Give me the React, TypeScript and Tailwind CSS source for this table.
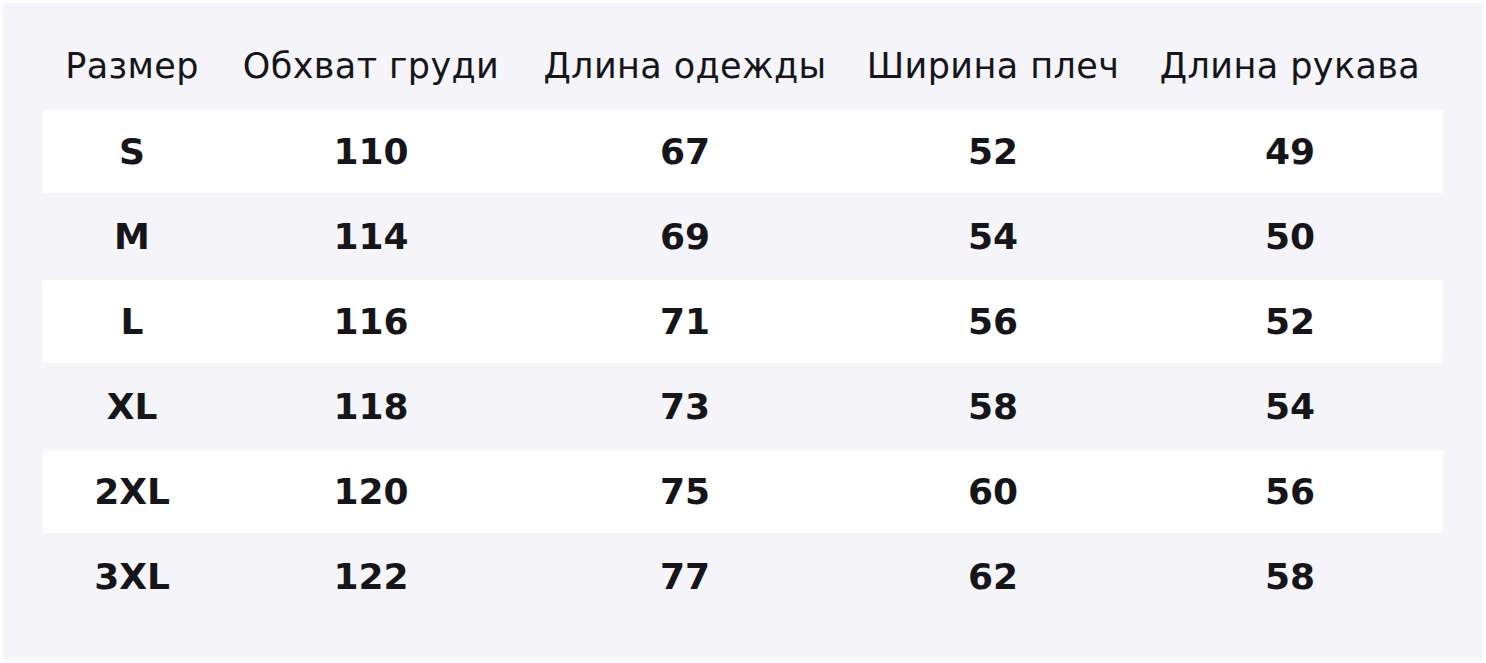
const headers = ['Размер', 'Обхват груди', 'Длина одежды', 'Ширина плеч', 'Длина рукава']

const rows = [
  ['S', '110', '67', '52', '49'],
  ['M', '114', '69', '54', '50'],
  ['L', '116', '71', '56', '52'],
  ['XL', '118', '73', '58', '54'],
  ['2XL', '120', '75', '60', '56'],
  ['3XL', '122', '77', '62', '58']
]

const widths = ['w-[178px]', 'w-[300px]', 'w-[328px]', 'w-[288px]', 'w-[306px]']

export default function App() {
  return (
    <div className="h-[663px] w-[1486px] bg-white p-[3px]" style={{ fontFamily: '"DejaVu Sans", sans-serif' }}>
      <div className="h-[657px] bg-[#f4f4f9] px-[40px] pt-[20px] text-[#15151a]">
        <table className="w-[1400px] table-fixed border-separate border-spacing-x-0 border-spacing-y-[2px]">
          <thead>
            <tr className="h-[83px]">
              {headers.map((h, i) => (
                <th key={h} className={`${widths[i]} p-0 text-center align-middle text-[35px] font-normal tracking-[0.4px]`}>
                  {h}
                </th>
              ))}
            </tr>
          </thead>
          <tbody>
            {rows.map((r, ri) => (
              <tr key={r[0]} className={`h-[83px] ${ri % 2 === 0 ? 'bg-white' : 'bg-transparent'}`}>
                {r.map((c, ci) => (
                  <td key={ci} className="p-0 text-center align-middle text-[36px] font-bold">
                    {c}
                  </td>
                ))}
              </tr>
            ))}
          </tbody>
        </table>
      </div>
    </div>
  )
}
